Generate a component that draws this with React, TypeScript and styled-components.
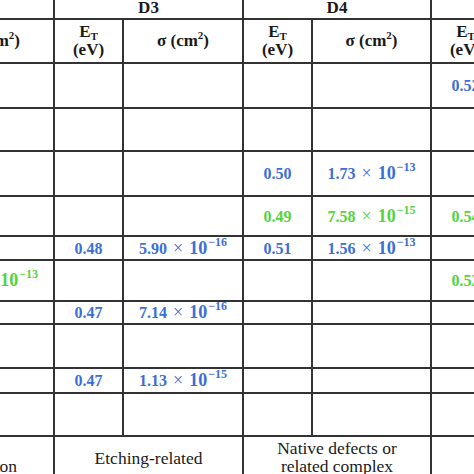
import styled, { createGlobalStyle } from 'styled-components';

const GlobalStyle = createGlobalStyle`
  html, body {
    margin: 0;
    padding: 0;
    background: #ffffff;
    overflow: hidden;
  }
  body {
    font-family: 'Liberation Serif', 'DejaVu Serif', serif;
    color: #1a1a1a;
  }
`;

const Viewport = styled.div`
  width: 474px;
  height: 474px;
  overflow: hidden;
`;

const Table = styled.table`
  border-collapse: collapse;
  table-layout: fixed;
  width: 755px;
  margin: -4px 0 0 -136px;
`;

const Row = styled.tr<{ $h: number }>`
  height: ${(p) => p.$h}px;
`;

const Cell = styled.td`
  border: 2px solid #333;
  padding: 0 4px;
  text-align: center;
  vertical-align: middle;
  font-size: 17.5px;
  line-height: 1.15;
  white-space: nowrap;
`;

const HeadCell = styled(Cell).attrs({ as: 'th' })`
  font-weight: bold;
  font-size: 17px;
  line-height: 1.08;
`;

const Sub = styled.sub`
  font-size: 11px;
  vertical-align: -3px;
  line-height: 0;
`;

const Sup = styled.sup`
  font-size: 11px;
  vertical-align: 7px;
  line-height: 0;
`;

const Value = styled.span<{ $tone: 'blue' | 'green' }>`
  font-weight: bold;
  font-size: 16px;
  color: ${(p) => (p.$tone === 'blue' ? '#3c6fd5' : '#52d43b')};
`;

const Times = styled.span`
  font-weight: normal;
  font-size: 18px;
  margin: 0 6px;
`;

const Base = styled.span`
  font-size: 18px;
`;

const Exp = styled.sup`
  font-size: 12px;
  vertical-align: 8px;
  line-height: 0;
  margin-left: 1px;
`;

const Label = styled.span`
  display: inline-block;
  white-space: normal;
  line-height: 1.0;
`;

type Tone = 'blue' | 'green';
type Entry = { et: string; sig: [string, string]; tone: Tone } | null;

function Sci({ m, e, tone }: { m: string; e: string; tone: Tone }) {
  return (
    <Value $tone={tone}>
      {m}
      <Times>×</Times>
      <Base>10</Base>
      <Exp>−{e}</Exp>
    </Value>
  );
}

// one entry per defect group: D2, D3, D4, D5
const rows: { h: number; cells: Entry[] }[] = [
  { h: 45, cells: [null, null, null, { et: '0.52', sig: ['2.41', '14'], tone: 'blue' }] },
  { h: 43, cells: [null, null, null, null] },
  { h: 45, cells: [null, null, { et: '0.50', sig: ['1.73', '13'], tone: 'blue' }, null] },
  {
    h: 40,
    cells: [null, null, { et: '0.49', sig: ['7.58', '15'], tone: 'green' }, { et: '0.54', sig: ['3.12', '14'], tone: 'green' }],
  },
  {
    h: 24,
    cells: [null, { et: '0.48', sig: ['5.90', '16'], tone: 'blue' }, { et: '0.51', sig: ['1.56', '13'], tone: 'blue' }, null],
  },
  {
    h: 41,
    cells: [{ et: '0.45', sig: ['2.20', '13'], tone: 'green' }, null, null, { et: '0.53', sig: ['6.05', '14'], tone: 'green' }],
  },
  { h: 23, cells: [null, { et: '0.47', sig: ['7.14', '16'], tone: 'blue' }, null, null] },
  { h: 44, cells: [null, null, null, null] },
  { h: 25, cells: [null, { et: '0.47', sig: ['1.13', '15'], tone: 'blue' }, null, null] },
  { h: 43, cells: [null, null, null, null] },
];

const groups = ['D2', 'D3', 'D4', 'D5'];
const widths = [69, 120, 69, 120, 69, 119, 69, 120];

export default function App() {
  return (
    <Viewport>
      <GlobalStyle />
      <Table>
        <colgroup>
          {widths.map((w, i) => (
            <col key={i} style={{ width: w }} />
          ))}
        </colgroup>
        <thead>
          <Row $h={22}>
            {groups.map((g) => (
              <HeadCell key={g} colSpan={2}>
                {g}
              </HeadCell>
            ))}
          </Row>
          <Row $h={44}>
            {groups.map((g) => [
              <HeadCell key={`${g}-et`}>
                E<Sub>T</Sub>
                <br />
                (eV)
              </HeadCell>,
              <HeadCell key={`${g}-sig`}>
                σ (cm<Sup>2</Sup>)
              </HeadCell>,
            ])}
          </Row>
        </thead>
        <tbody>
          {rows.map((r, ri) => (
            <Row key={ri} $h={r.h}>
              {r.cells.map((c, ci) =>
                c
                  ? [
                      <Cell key={`${ci}-et`}>
                        <Value $tone={c.tone}>{c.et}</Value>
                      </Cell>,
                      <Cell key={`${ci}-sig`}>
                        <Sci m={c.sig[0]} e={c.sig[1]} tone={c.tone} />
                      </Cell>,
                    ]
                  : [<Cell key={`${ci}-et`} />, <Cell key={`${ci}-sig`} />],
              )}
            </Row>
          ))}
          <Row $h={44}>
            <Cell colSpan={2}>
              <Label>
                Related to
                <br />
                ion implantation
              </Label>
            </Cell>
            <Cell colSpan={2}>Etching-related</Cell>
            <Cell colSpan={2}>
              <Label>
                Native defects or
                <br />
                related complex
              </Label>
            </Cell>
            <Cell colSpan={2}>
              <Label>Surface states</Label>
            </Cell>
          </Row>
        </tbody>
      </Table>
    </Viewport>
  );
}
